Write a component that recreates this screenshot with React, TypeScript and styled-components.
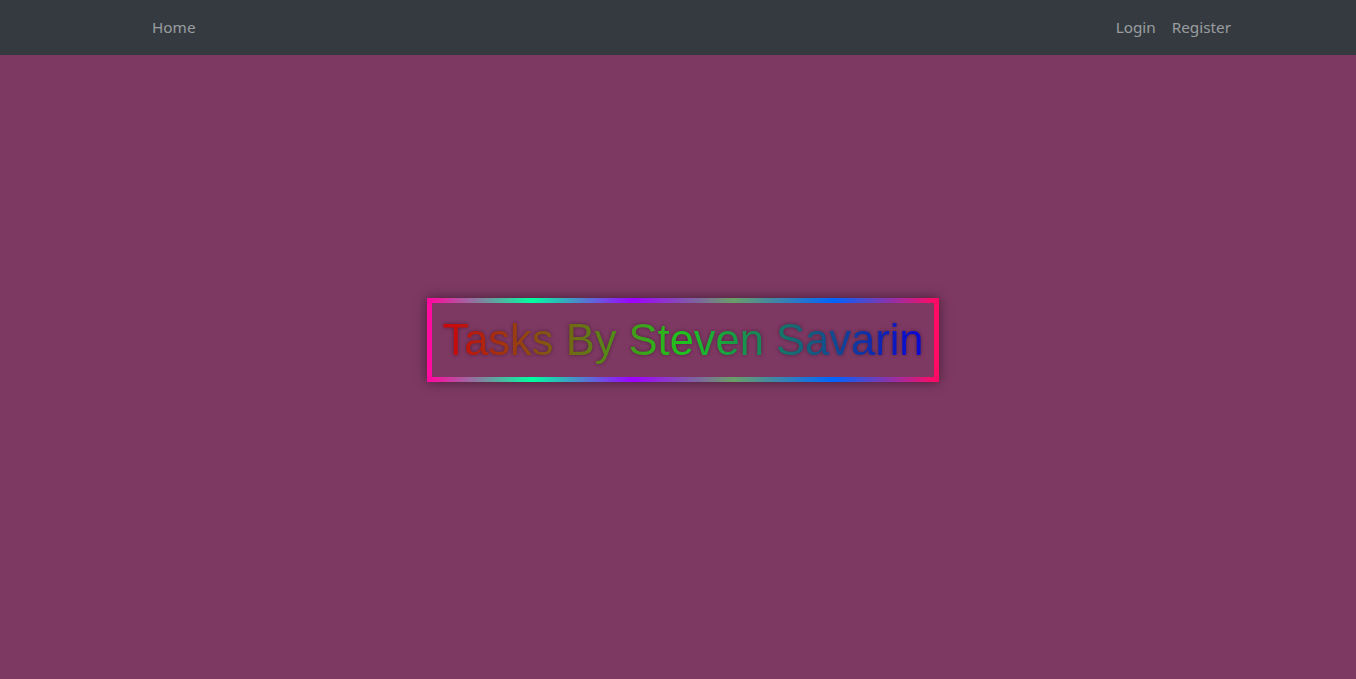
import React from "react";
import styled, { createGlobalStyle } from "styled-components";

const GlobalStyle = createGlobalStyle`
  html, body {
    margin: 0;
    padding: 0;
    background: #7e3963;
  }
  body {
    font-family: "Noto Sans", "Open Sans", sans-serif;
  }
`;

export default function App() {
  return (
    <>
      <GlobalStyle />
      <Navbar>
        <NavGroup>
          <NavLink href="#">Home</NavLink>
        </NavGroup>
        <NavGroup>
          <NavLink href="#">Login</NavLink>
          <NavLink href="#">Register</NavLink>
        </NavGroup>
      </Navbar>
      <Main>
        <TitleBox>
          <Title>Tasks By Steven Savarin</Title>
        </TitleBox>
      </Main>
    </>
  );
}

const Navbar = styled.nav`
  height: 55px;
  background: #343a40;
  display: flex;
  align-items: center;
  justify-content: space-between;
  padding: 0 117px 2px 144px;
  box-sizing: border-box;
`;

const NavGroup = styled.div`
  display: flex;
  align-items: center;
`;

const NavLink = styled.a`
  color: rgba(255, 255, 255, 0.5);
  text-decoration: none;
  font-size: 15.3px;
  padding: 8px;
`;

const Main = styled.main`
  height: calc(100vh - 55px);
  display: flex;
  align-items: center;
  justify-content: center;
  padding: 0 0 55px 10px;
  box-sizing: border-box;
`;

const TitleBox = styled.div`
  border: 5px solid;
  border-image: linear-gradient(
      to right,
      #ff0aa0 0%,
      #00ffa0 20%,
      #a000ff 40%,
      #6a9e68 60%,
      #0064ff 80%,
      #ff0a64 100%
    )
    1;
  padding: 13px 10px 12px;
  box-shadow: 0 0 12px rgba(0, 0, 0, 0.45);
`;

const Title = styled.h1`
  margin: 0;
  font-family: "Liberation Sans", Arial, sans-serif;
  font-weight: normal;
  font-size: 43.5px;
  white-space: nowrap;
  background: linear-gradient(to right, #c80a0a 2%, #1ec41e 50%, #0a0ad0 98%);
  -webkit-background-clip: text;
  background-clip: text;
  color: transparent;
  filter: drop-shadow(0 0 2px rgba(40, 10, 30, 0.55));
`;
